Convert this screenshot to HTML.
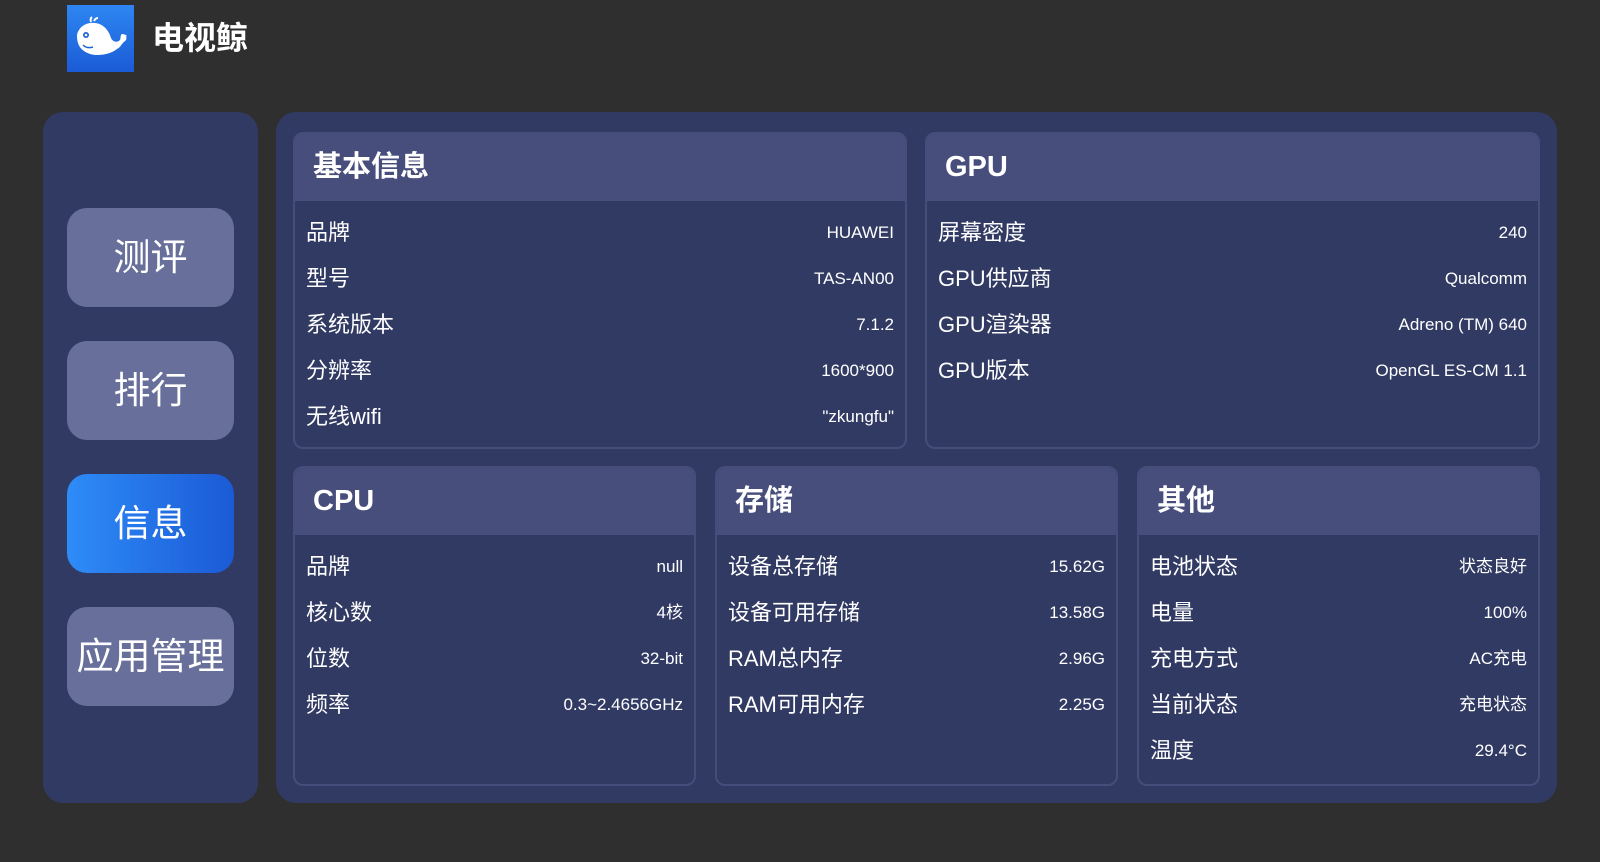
<!DOCTYPE html>
<html><head><meta charset="utf-8"><style>
*{margin:0;padding:0;box-sizing:border-box}
body{width:1600px;height:862px;background:#2f2f2f;font-family:"Liberation Sans","Noto Sans CJK SC",sans-serif;color:#fff;position:relative;overflow:hidden}
.logo{position:absolute;left:67px;top:5px;width:67px;height:67px;background:linear-gradient(#2e86f2,#1b5bd6)}
.title{position:absolute;left:152px;top:16px;font-size:32px;font-weight:bold;line-height:44px}
.side{position:absolute;left:43px;top:112px;width:215px;height:691px;background:#313a63;border-radius:20px}
.btn{position:absolute;left:67px;width:167px;height:99px;border-radius:20px;background:#686f9b;font-size:37px;text-align:center;line-height:99px}
.btn.act{background:linear-gradient(90deg,#2e8cf7,#1b5ad6)}
.main{position:absolute;left:276px;top:112px;width:1281px;height:691px;background:#313a63;border-radius:20px}
.card{position:absolute;border:2px solid #464d7a;border-radius:10px;overflow:hidden}
.card .h{height:67px;background:#474e7b;font-size:29px;font-weight:bold;padding-left:18px;line-height:67px}
.row{position:relative;height:46px;line-height:46px;font-size:22px;padding-left:11px}
.row span{position:absolute;right:11px;top:0;font-size:17px}
.rows{padding-top:9px}
</style></head><body>
<div class="logo"><svg width="67" height="67" viewBox="0 0 67 67"><path d="M10 30c2-9 10-13 18-12 9 1 14 8 16 15 2 4 6 5 9 2 1-2 0-5 2-6 2 0 4 1 5 2-2 0 1 3-2 5-3 2-4 6-8 8-5 4-12 6-20 6-9 0-17-5-19-12-1-3-1-6-1-8z" fill="#fff"/><circle cx="19" cy="30" r="3" fill="#1f63d8"/><circle cx="19" cy="30" r="1.3" fill="#fff"/><path d="M24 17c-1-3 0-4 1-5M27 16c1-2 2-3 4-3" stroke="#fff" stroke-width="2" fill="none"/><path d="M16 40c3 3 7 3 10 2" stroke="#1f63d8" stroke-width="1.5" fill="none"/></svg></div>
<div class="title">电视鲸</div>
<div class="side"></div>
<div class="btn" style="top:208px">测评</div>
<div class="btn" style="top:341px">排行</div>
<div class="btn act" style="top:474px">信息</div>
<div class="btn" style="top:607px">应用管理</div>
<div class="main"></div>

<div class="card" style="left:293px;top:132px;width:614px;height:317px"><div class="h">基本信息</div><div class="rows">
<div class="row">品牌<span>HUAWEI</span></div><div class="row">型号<span>TAS-AN00</span></div><div class="row">系统版本<span>7.1.2</span></div><div class="row">分辨率<span>1600*900</span></div><div class="row">无线wifi<span>"zkungfu"</span></div></div></div>

<div class="card" style="left:925px;top:132px;width:615px;height:317px"><div class="h">GPU</div><div class="rows">
<div class="row">屏幕密度<span>240</span></div><div class="row">GPU供应商<span>Qualcomm</span></div><div class="row">GPU渲染器<span>Adreno (TM) 640</span></div><div class="row">GPU版本<span>OpenGL ES-CM 1.1</span></div></div></div>

<div class="card" style="left:293px;top:466px;width:403px;height:320px"><div class="h">CPU</div><div class="rows">
<div class="row">品牌<span>null</span></div><div class="row">核心数<span>4核</span></div><div class="row">位数<span>32-bit</span></div><div class="row">频率<span>0.3~2.4656GHz</span></div></div></div>

<div class="card" style="left:715px;top:466px;width:403px;height:320px"><div class="h">存储</div><div class="rows">
<div class="row">设备总存储<span>15.62G</span></div><div class="row">设备可用存储<span>13.58G</span></div><div class="row">RAM总内存<span>2.96G</span></div><div class="row">RAM可用内存<span>2.25G</span></div></div></div>

<div class="card" style="left:1137px;top:466px;width:403px;height:320px"><div class="h">其他</div><div class="rows">
<div class="row">电池状态<span>状态良好</span></div><div class="row">电量<span>100%</span></div><div class="row">充电方式<span>AC充电</span></div><div class="row">当前状态<span>充电状态</span></div><div class="row">温度<span>29.4°C</span></div></div></div>
</body></html>
